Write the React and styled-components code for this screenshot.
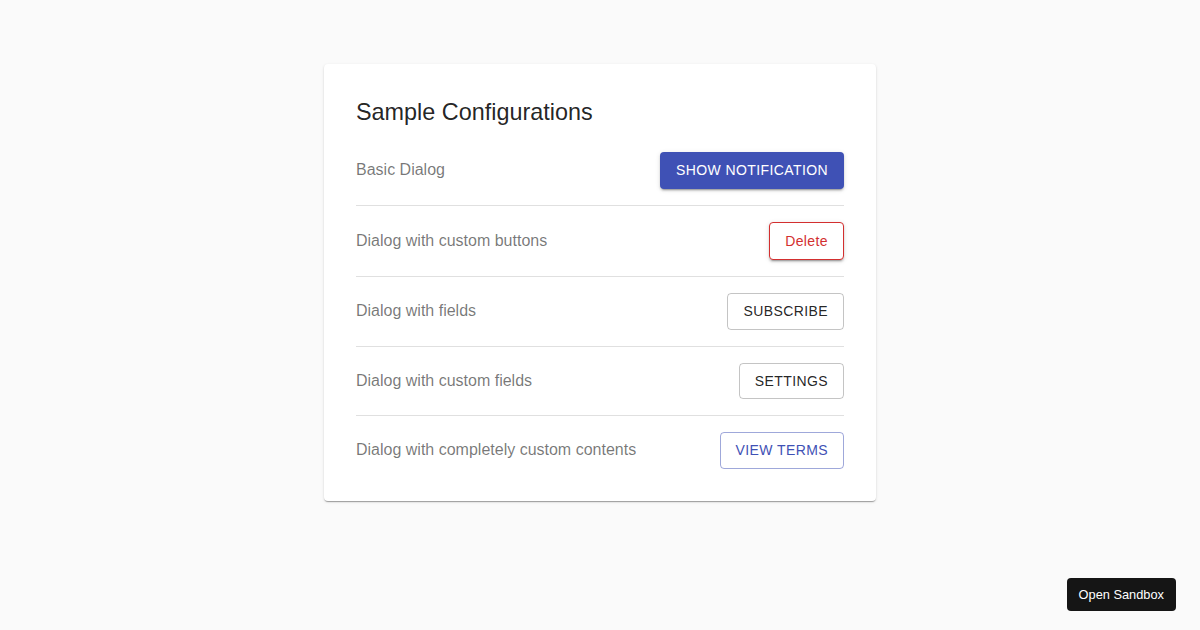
import React from "react"
import styled, { createGlobalStyle } from "styled-components"

const GlobalStyle = createGlobalStyle`
	html, body {
		margin: 0;
		padding: 0;
		background: #fafafa;
		font-family: "Liberation Sans", Arial, sans-serif;
	}
`

const rows = [
	{ label: "Basic Dialog", text: "SHOW NOTIFICATION", variant: "contained" },
	{ label: "Dialog with custom buttons", text: "Delete", variant: "danger" },
	{ label: "Dialog with fields", text: "SUBSCRIBE", variant: "outlined" },
	{ label: "Dialog with custom fields", text: "SETTINGS", variant: "outlined" },
	{
		label: "Dialog with completely custom contents",
		text: "VIEW TERMS",
		variant: "primaryOutlined",
	},
]

function App() {
	return (
		<Page>
			<GlobalStyle />
			<Card>
				<Title>Sample Configurations</Title>
				{rows.map((row) => (
					<Row key={row.label}>
						<Label>{row.label}</Label>
						<Button $variant={row.variant}>{row.text}</Button>
					</Row>
				))}
			</Card>
			<SandboxButton>Open Sandbox</SandboxButton>
		</Page>
	)
}

export default App

const Page = styled.div`
	min-height: 630px;
	padding-top: 64px;
	box-sizing: border-box;
`

const Card = styled.div`
	width: 552px;
	margin: 0 auto;
	box-sizing: border-box;
	padding: 32px 32px 16px;
	background: #fff;
	border-radius: 4px;
	box-shadow: 0px 2px 1px -1px rgba(0, 0, 0, 0.2),
		0px 1px 1px 0px rgba(0, 0, 0, 0.14), 0px 1px 3px 0px rgba(0, 0, 0, 0.12);
`

const Title = styled.h2`
	margin: 0 0 8px;
	font-size: 23.4px;
	line-height: 32px;
	font-weight: 400;
	color: rgba(0, 0, 0, 0.87);
`

const Row = styled.div`
	display: flex;
	align-items: center;
	justify-content: space-between;
	padding: 16px 0;
	border-bottom: 1px solid #e0e0e0;

	&:last-child {
		border-bottom: none;
	}
`

const Label = styled.span`
	font-size: 16px;
	line-height: 24px;
	color: rgba(0, 0, 0, 0.54);
`

const variants = {
	contained: `
		background: #3f51b5;
		color: #fff;
		border: none;
		padding: 6px 16px;
		box-shadow: 0px 3px 1px -2px rgba(0,0,0,0.2), 0px 2px 2px 0px rgba(0,0,0,0.14), 0px 1px 5px 0px rgba(0,0,0,0.12);
	`,
	danger: `
		background: #fff;
		color: #d32f2f;
		border: 1px solid #d32f2f;
		padding: 6px 15px;
		text-transform: none;
		box-shadow: 0px 3px 1px -2px rgba(0,0,0,0.2), 0px 2px 2px 0px rgba(0,0,0,0.14), 0px 1px 5px 0px rgba(0,0,0,0.12);
	`,
	outlined: `
		background: transparent;
		color: rgba(0, 0, 0, 0.87);
		border: 1px solid rgba(0, 0, 0, 0.23);
		padding: 5px 15px;
	`,
	primaryOutlined: `
		background: transparent;
		color: #3f51b5;
		border: 1px solid rgba(63, 81, 181, 0.5);
		padding: 5px 15px;
	`,
}

const Button = styled.button`
	font-family: "Liberation Sans", Arial, sans-serif;
	font-size: 14px;
	font-weight: 400;
	line-height: 1.75;
	letter-spacing: 0.02857em;
	border-radius: 4px;
	min-width: 64px;
	cursor: pointer;
	${(p) => variants[p.$variant]}
`

const SandboxButton = styled.button`
	position: fixed;
	right: 24px;
	bottom: 19px;
	height: 33px;
	padding: 0 12px;
	background: #151515;
	color: #fff;
	border: none;
	border-radius: 4px;
	font-family: "Liberation Sans", Arial, sans-serif;
	font-size: 12.8px;
`
